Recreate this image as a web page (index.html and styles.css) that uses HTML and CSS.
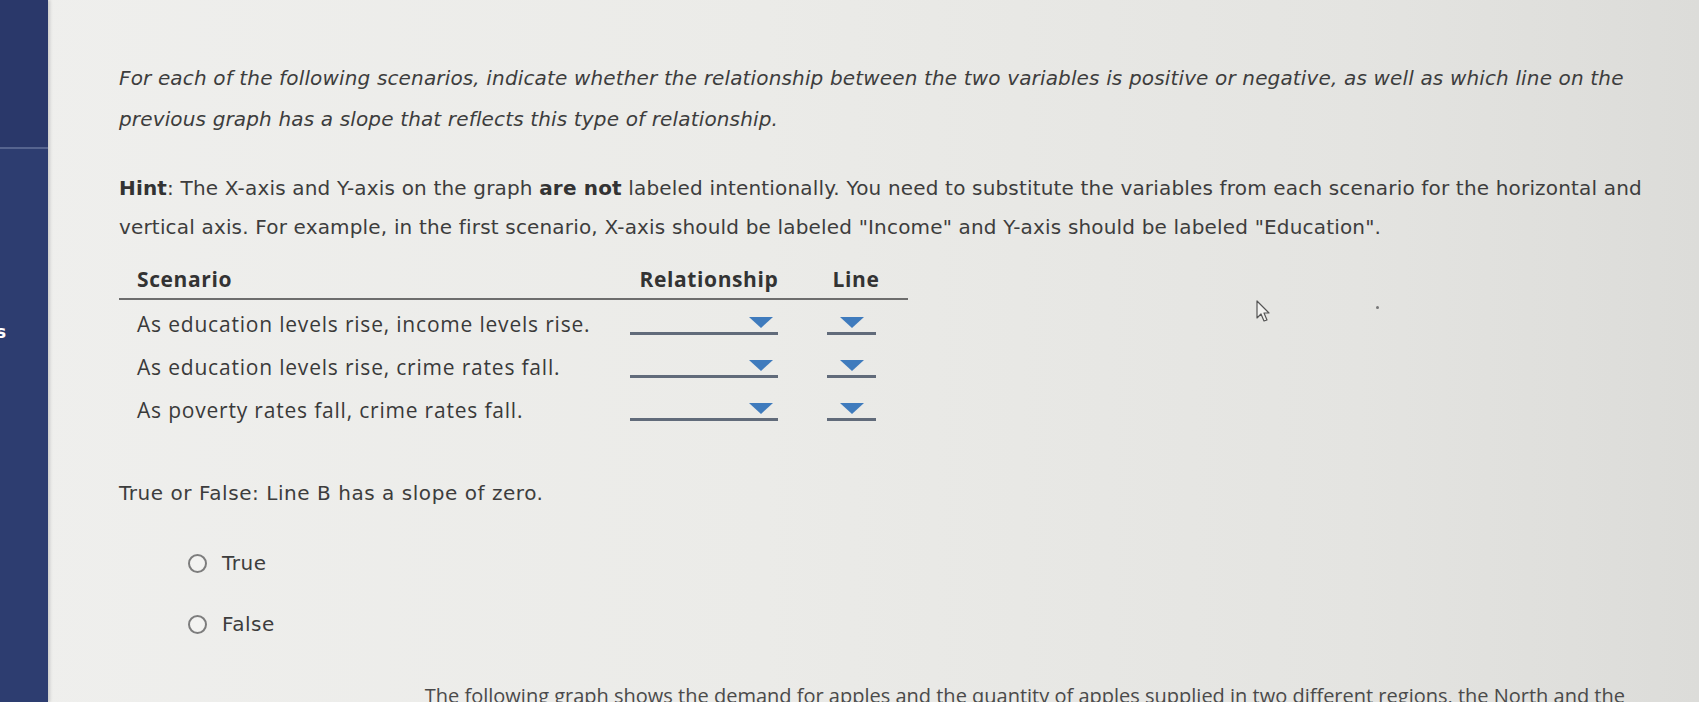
FILE: index.html
```html
<!DOCTYPE html>
<html>
<head>
<meta charset="utf-8">
<link rel="stylesheet" href="styles.css">
</head>
<body>
<div class="page">
  <aside class="sidebar">
    <div class="sidebar-top"></div>
    <div class="sidebar-rest"><span class="side-glyph">s</span></div>
  </aside>
  <main class="content">
    <p class="intro">For each of the following scenarios, indicate whether the relationship between the two variables is positive or negative, as well as which line on the previous graph has a slope that reflects this type of relationship.</p>
    <p class="hint"><b>Hint</b>: The X-axis and Y-axis on the graph <b>are not</b> labeled intentionally. You need to substitute the variables from each scenario for the horizontal and vertical axis. For example, in the first scenario, X-axis should be labeled "Income" and Y-axis should be labeled "Education".</p>

    <div class="grid">
      <div class="hd hd-scen">Scenario</div>
      <div class="hd hd-c">Relationship</div>
      <div class="hd hd-c">Line</div>

      <div class="cell scen first">As education levels rise, income levels rise.</div>
      <div class="cell c first"><span class="dd dd-wide"><span class="tri"></span></span></div>
      <div class="cell c first"><span class="dd dd-narrow"><span class="tri"></span></span></div>

      <div class="cell scen">As education levels rise, crime rates fall.</div>
      <div class="cell c"><span class="dd dd-wide"><span class="tri"></span></span></div>
      <div class="cell c"><span class="dd dd-narrow"><span class="tri"></span></span></div>

      <div class="cell scen">As poverty rates fall, crime rates fall.</div>
      <div class="cell c"><span class="dd dd-wide"><span class="tri"></span></span></div>
      <div class="cell c"><span class="dd dd-narrow"><span class="tri"></span></span></div>
    </div>

    <p class="question">True or False: Line B has a slope of zero.</p>
    <div class="options">
      <label class="opt"><span class="radio"></span>True</label>
      <label class="opt"><span class="radio"></span>False</label>
    </div>
    <div class="next-row"><p class="next">The following graph shows the demand for apples and the quantity of apples supplied in two different regions, the North and the</p></div>
  </main>
  <svg class="cursor" width="16" height="24" viewBox="0 0 16 24"><path d="M1 1 L1 18 L5 14 L8 21 L11 20 L8 13 L13 13 Z" fill="#f2f2f0" stroke="#555" stroke-width="1.2" stroke-linejoin="round"/></svg>
  <span class="speck"></span>
</div>
</body>
</html>
```
FILE: styles.css
```css
html, body {
  margin: 0;
  padding: 0;
  height: 702px;
  overflow: hidden;
}
body {
  background: #e9e9e6;
}
.page {
  position: relative;
  display: flex;
  height: 702px;
  overflow: hidden;
  background: linear-gradient(90deg, #efefed 0%, #ebebe8 45%, #e4e4e1 80%, #dcdcd9 100%);
}
.sidebar {
  width: 48px;
  flex: none;
  display: flex;
  flex-direction: column;
  background: #2c3b6c;
  box-shadow: 2px 0 3px rgba(0,0,0,0.15);
}
.sidebar-top {
  height: 147px;
  border-bottom: 2px solid #56648f;
  background: #2a386a;
}
.sidebar-rest {
  flex: 1;
  position: relative;
  background: #2d3d70;
}
.side-glyph {
  position: absolute;
  left: -4px;
  top: 173px;
  color: #ffffff;
  font: bold 17px "DejaVu Sans", sans-serif;
}
.content {
  flex: 1;
  min-width: 0;
  padding: 58px 0 0 71px;
  color: #3d3d3d;
  font-family: "DejaVu Sans", Verdana, sans-serif;
  font-size: 20px;
}
.intro {
  margin: 0;
  font-style: italic;
  line-height: 41px;
  letter-spacing: 0.15px;
  width: 1540px;
}
.hint {
  margin: 29px 0 0 0;
  line-height: 39px;
  letter-spacing: 0.17px;
  width: 1560px;
}
.hint b {
  font-weight: bold;
  color: #333;
}
.grid {
  margin-top: 13px;
  display: grid;
  grid-template-columns: 495px 190px 104px;
  width: 789px;
  font-family: "Open Sans", "Lato", sans-serif;
  font-size: 21px;
  letter-spacing: 0.8px;
  color: #3a3a3a;
}
.hd {
  height: 38px;
  display: flex;
  align-items: center;
  font-weight: bold;
  letter-spacing: 0.6px;
  border-bottom: 2px solid #6d6d6d;
  color: #333;
}
.hd-scen {
  padding-left: 18px;
}
.hd-c {
  justify-content: center;
}
.cell {
  height: 43px;
  display: flex;
  align-items: center;
}
.cell.first {
  margin-top: 2px;
}
.scen {
  padding-left: 18px;
}
.c {
  justify-content: center;
}
.dd {
  display: flex;
  justify-content: flex-end;
  align-items: center;
  height: 20px;
  border-bottom: 3px solid #616b7a;
  margin-top: 0;
  margin-right: 10px;
}
.dd-wide {
  width: 148px;
}
.dd-narrow {
  width: 49px;
  justify-content: center;
}
.tri {
  width: 0;
  height: 0;
  border-left: 12px solid transparent;
  border-right: 12px solid transparent;
  border-top: 11px solid #3f7bbd;
  margin-right: 5px;
}
.dd-narrow .tri {
  margin-right: 0;
  margin-left: 2px;
}
.question {
  margin: 50px 0 0 0;
  line-height: 24px;
  letter-spacing: 0.55px;
}
.options {
  display: flex;
  flex-direction: column;
  gap: 37px;
  margin-top: 46px;
  padding-left: 69px;
}
.opt {
  display: flex;
  align-items: center;
  gap: 15px;
  height: 24px;
  letter-spacing: 0.5px;
}
.radio {
  width: 15px;
  height: 15px;
  border: 2px solid #7d7d7d;
  border-radius: 50%;
  background: #f3f3f1;
}
.next-row {
  display: flex;
  justify-content: flex-end;
  padding-right: 74px;
  margin-top: 45px;
}
.next {
  margin: 0;
  font-family: "Open Sans", sans-serif;
  font-size: 20px;
  line-height: 30px;
  color: #4a4a4a;
  white-space: nowrap;
}
.cursor {
  position: absolute;
  left: 1256px;
  top: 300px;
}
.speck {
  position: absolute;
  left: 1376px;
  top: 306px;
  width: 3px;
  height: 3px;
  border-radius: 50%;
  background: #777;
}
```
